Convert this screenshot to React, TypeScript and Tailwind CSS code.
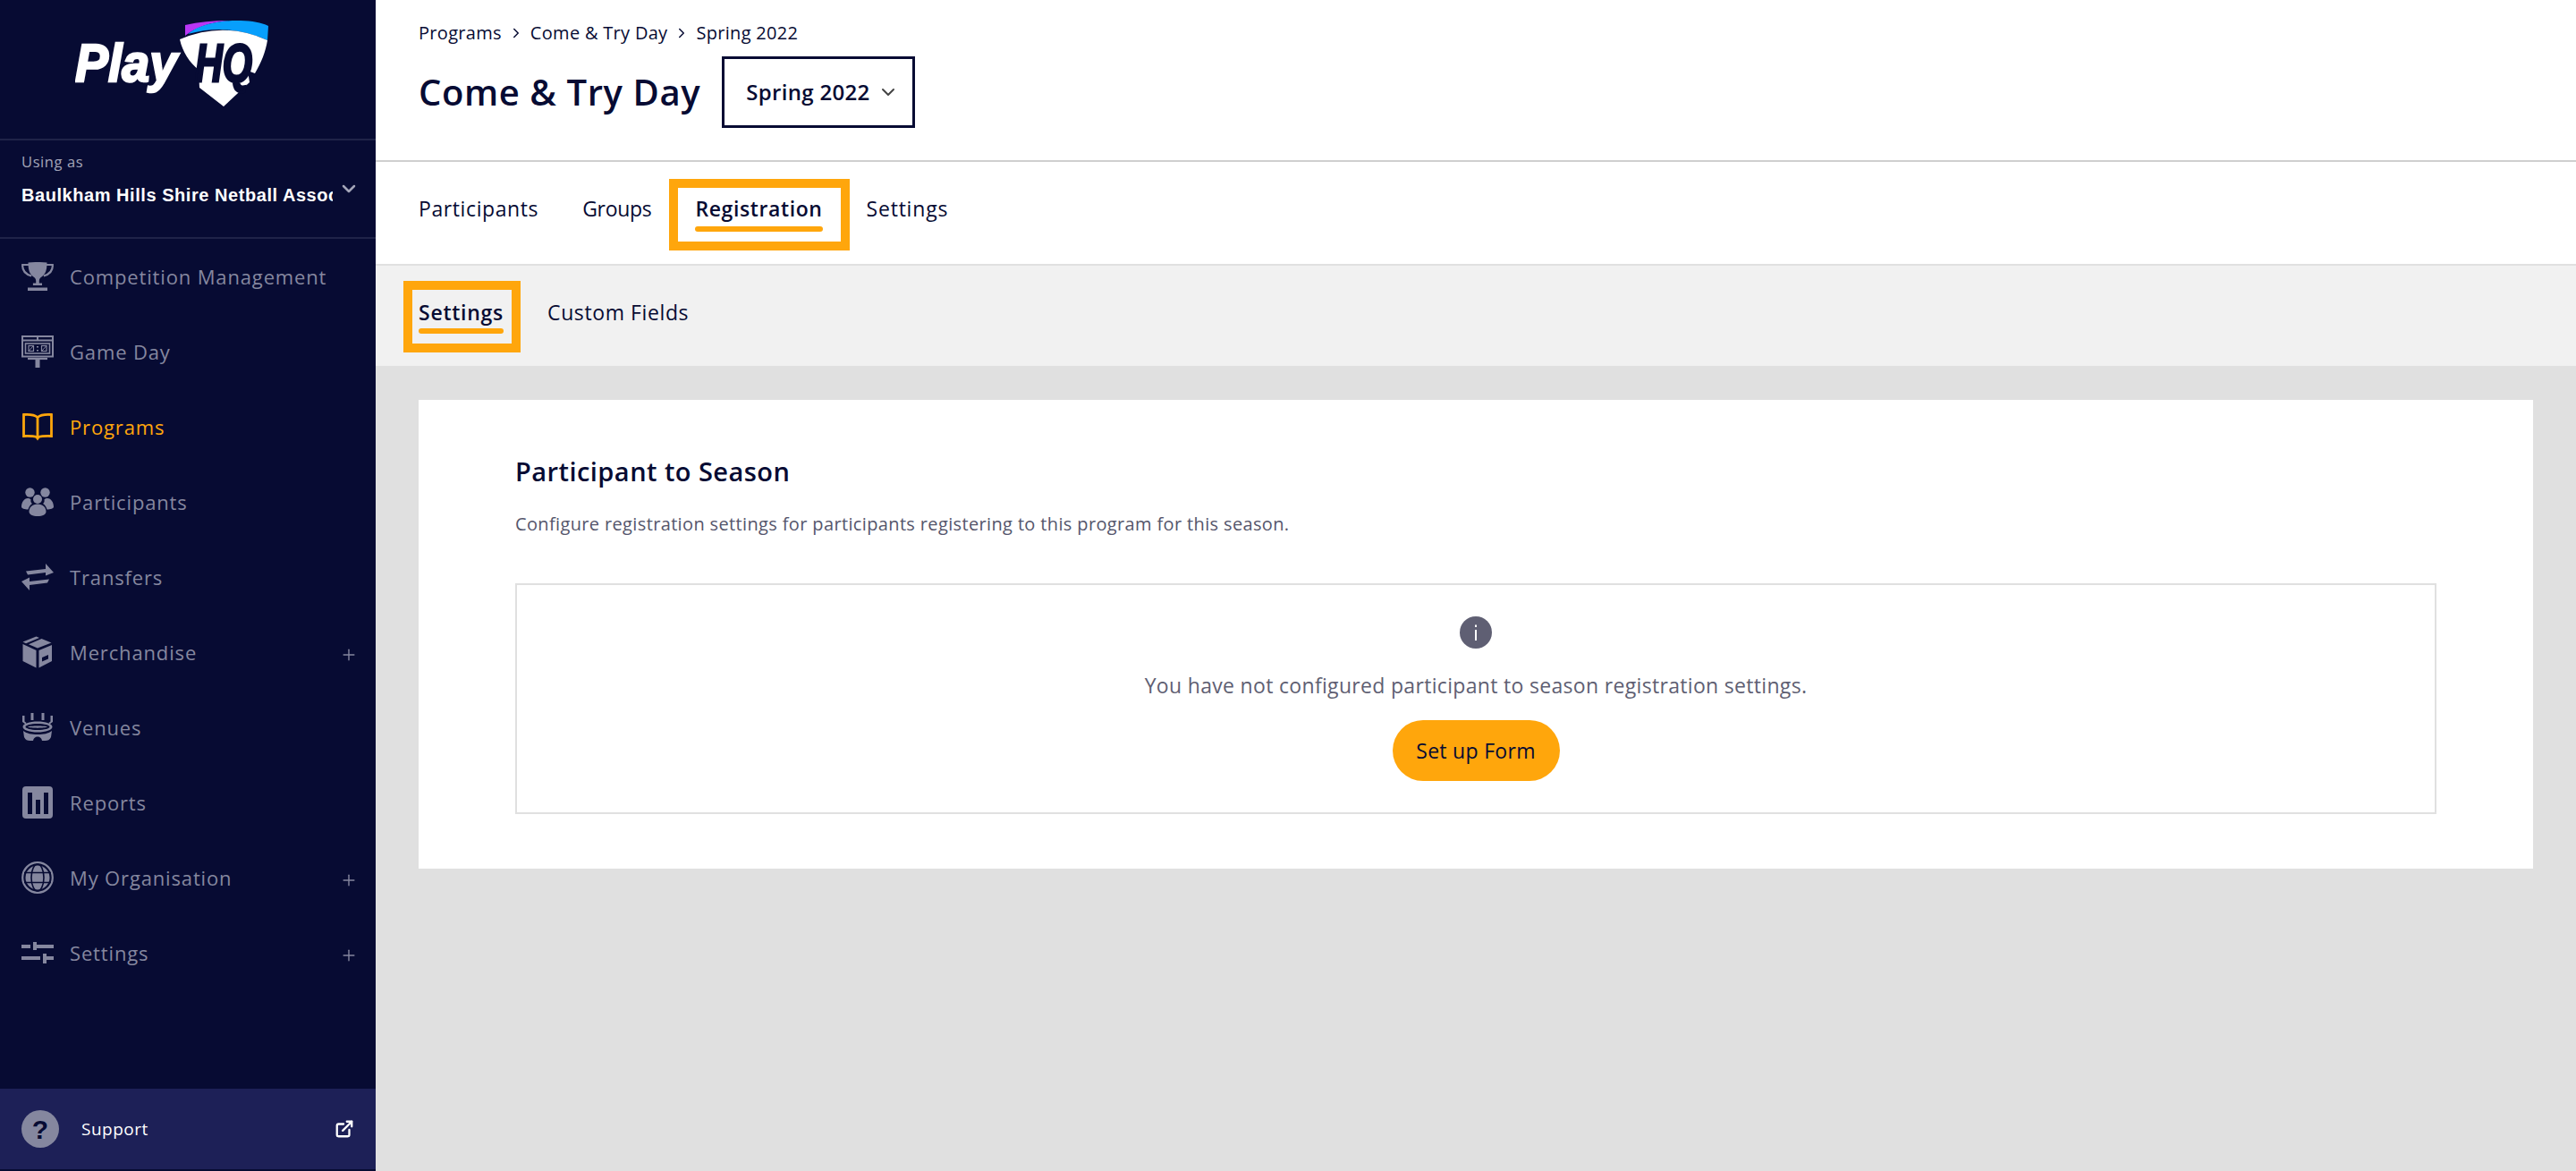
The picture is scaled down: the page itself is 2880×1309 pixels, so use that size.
import { ChevronDown, ChevronRight, Plus, ExternalLink } from "lucide-react";
import type { ReactNode } from "react";

const Trophy = () => (
  <svg viewBox="0 0 36 32" className="w-9 h-8" fill="currentColor">
    <path d="M7.500 0.500c6-.7 15-.7 21 0 0 8-1.500 13-6 16-1.400 1-2.700 2-2.700 4.500v2.500h3.200v2.500H12.900v-2.500h3.300V21c0-2.500-1.300-3.500-2.700-4.500-4.500-3-6-8-6-16z" />
    <path d="M8 3H1.200c-.5 6.500 3.300 10.500 10 12.500M28 3h6.800c.5 6.500-3.300 10.500-10 12.500" fill="none" stroke="currentColor" strokeWidth="2.200" />
    <rect x="7" y="28.500" width="22" height="3.500" />
  </svg>
);

const Scoreboard = () => (
  <svg viewBox="0 0 36 36" className="w-9 h-9" fill="none" stroke="currentColor" strokeWidth="2">
    <rect x="1" y="1" width="34" height="22.500" />
    <path d="M1 5.500h34M18 1v4.500" />
    <rect x="4.500" y="9" width="27" height="11" strokeWidth="1.600" />
    <rect x="8" y="11.500" width="5.500" height="6" strokeWidth="1.200" />
    <rect x="22.500" y="11.500" width="5.500" height="6" strokeWidth="1.200" />
    <path d="M8 17.500l5.500-6M22.500 17.500l5.500-6" strokeWidth="1" />
    <path d="M18 12v1.500M18 16v1.500" strokeWidth="2" />
    <path d="M7 26h22" strokeWidth="2.200" />
    <rect x="15.500" y="26" width="5" height="10" fill="currentColor" stroke="none" />
  </svg>
);

const Book = () => (
  <svg viewBox="0 0 36 32" className="w-9 h-8" fill="none" stroke="currentColor" strokeWidth="2.800">
    <path d="M18 5.500C15 3 9 2 2.500 2.500v24c6-.3 11 0 15.500 1 4.500-1 9.500-1.300 15.500-1v-24C27 2 21 3 18 5.500zM18 5.500v22" />
    <path d="M15.500 28h5l-2.500 3.500z" fill="currentColor" stroke="none" />
  </svg>
);

const People = () => (
  <svg viewBox="0 0 36 32" className="w-9 h-8" fill="currentColor">
    <circle cx="9.500" cy="5.500" r="5.200" />
    <circle cx="26.500" cy="5.500" r="5.200" />
    <path d="M0 21.500c0-5 3-9.500 7-9.500 1.500 0 3 .5 3.500 1.500-.5 2 .3 3.500 1.500 4.500-2.500 1.500-4 4-4.500 6.500-4 0-7.500-1-7.500-3z" />
    <path d="M36 21.500c0-5-3-9.500-7-9.500-1.500 0-3 .5-3.500 1.500.5 2-.3 3.500-1.500 4.500 2.500 1.500 4 4 4.500 6.500 4 0 7.500-1 7.500-3z" />
    <circle cx="18" cy="13" r="5" />
    <path d="M8.500 27c0-4.500 3.500-8.500 9.500-8.500s9.500 4 9.500 8.500c0 3-4 5-9.500 5s-9.500-2-9.500-5z" />
  </svg>
);

const Transfers = () => (
  <svg viewBox="0 0 36 30" className="w-9 h-[30px]" fill="currentColor">
    <path d="M5 8.500L27 6V0l9 10-9 3.500V10L7 12.500z" />
    <path d="M31 17.500L9 20V15.500L0 20l9 10v-6l20-2.500z" />
  </svg>
);

const Box = () => (
  <svg viewBox="0 0 34 36" className="w-[34px] h-9" fill="currentColor">
    <path d="M15.500 0.500L0.500 6.500l3.500 1.800L19 2z" />
    <path d="M21.500 3L7 9.200l10 4.300 15.500-6z" />
    <path d="M0.500 9v19l15 7.500V16z" />
    <path d="M33 10L18.500 16v19.500L33 28zM22 24l7-3v4.500l-7 3z" fillRule="evenodd" />
  </svg>
);

const Venue = () => (
  <svg viewBox="0 0 36 32" className="w-9 h-8" fill="currentColor">
    <path d="M1 3h2.500v6.500L5.500 11 4.500 12.500 1 10zM35 3h-2.500v6.500L30.500 11l1 1.500L35 10zM10.500 0h3v8h-3zM22.500 0h3v8h-3z" />
    <path d="M18 9.500c9 0 16.500 2.500 16.500 6 0 3.500-7.500 6-16.500 6s-16.500-2.500-16.500-6c0-3.500 7.500-6 16.500-6zm0 2.500C10 12 4.500 13.800 4.500 15.500S10 19 18 19s13.500-1.700 13.500-3.500S26 12 18 12z" fillRule="evenodd" />
    <path d="M7 15.500c3-1.200 19-1.200 22 0-3 1.500-19 1.500-22 0z" />
    <path d="M2 20c4 3 9 4 16 4s12-1 16-4l-1 7c-1.500 3-3.500 4-6.500 4h-3.500c-.5-3-2.500-4.500-5-4.500s-4.500 1.500-5 4.500H9.500C6.500 31 4.500 30 3 27z" />
  </svg>
);

const Reports = () => (
  <svg viewBox="0 0 34 36" className="w-[34px] h-9" fill="currentColor">
    <path d="M4 0h26a4 4 0 0 1 4 4v28a4 4 0 0 1-4 4H4a4 4 0 0 1-4-4V4a4 4 0 0 1 4-4zM6 7v24h5V7zM15 15v16h5V15zM24 7v24h5V7z" fillRule="evenodd" />
  </svg>
);

const Globe = () => (
  <svg viewBox="0 0 36 36" className="w-9 h-9" fill="none" stroke="currentColor">
    <circle cx="18" cy="18" r="16.800" strokeWidth="2.200" />
    <circle cx="18" cy="18" r="13.500" fill="currentColor" stroke="none" />
    <g stroke="#070b33" strokeWidth="1.600">
      <ellipse cx="18" cy="18" rx="7" ry="15" />
      <path d="M3 12.500h30M3 23.500h30" />
    </g>
  </svg>
);

const Sliders = () => (
  <svg viewBox="0 0 36 24" className="w-9 h-6" fill="currentColor">
    <rect x="0" y="3" width="10" height="4" />
    <rect x="13" y="0" width="4" height="9" />
    <rect x="17" y="3" width="19" height="4" />
    <rect x="0" y="16" width="21" height="4" />
    <rect x="24" y="13" width="4" height="11" />
    <rect x="28" y="16" width="8" height="4" />
  </svg>
);

const Logo = () => (
  <svg viewBox="0 0 230 105" className="w-[230px] h-[105px]">
    <path d="M123 20V8Q145 3 172 3Q140 6 123 20z" fill="#b936f5" />
    <path d="M126 18C140 6 165 2.500 185 3C198 3.500 208 5 216 9L215 25Q170 5 126 18z" fill="#079ffc" />
    <path d="M117 24Q166 3 215 25C213 38 208 50 201 62L193 59L195 72L166 99L139 78L138 58C128 50 120 38 117 24z" fill="#fff" />
    <text x="0" y="71" fontSize="60" fontWeight="700" fontStyle="italic" textLength="114" lengthAdjust="spacingAndGlyphs" fill="#fff" stroke="#fff" strokeWidth="2.500" className="font-['Liberation_Sans']">Play</text>
    <text x="134" y="71" fontSize="60" fontWeight="700" fontStyle="italic" textLength="64" lengthAdjust="spacingAndGlyphs" fill="#070b33" stroke="#070b33" strokeWidth="3" className="font-['Liberation_Sans']">HQ</text>
  </svg>
);

const navItems: { label: string; icon: ReactNode; active?: boolean; plus?: boolean }[] = [
  { label: "Competition Management", icon: <Trophy /> },
  { label: "Game Day", icon: <Scoreboard /> },
  { label: "Programs", icon: <Book />, active: true },
  { label: "Participants", icon: <People /> },
  { label: "Transfers", icon: <Transfers /> },
  { label: "Merchandise", icon: <Box />, plus: true },
  { label: "Venues", icon: <Venue /> },
  { label: "Reports", icon: <Reports /> },
  { label: "My Organisation", icon: <Globe />, plus: true },
  { label: "Settings", icon: <Sliders />, plus: true },
];

const Sidebar = () => (
  <aside className="w-[420px] shrink-0 h-full flex flex-col bg-[#070b33] font-['Open_Sans',sans-serif]">
    <div className="h-[157px] shrink-0 border-b-2 border-[#1f2348] flex pt-[20px] pl-[84px]">
      <Logo />
    </div>
    <div className="h-[110px] shrink-0 border-b-2 border-[#1f2348] pl-6 pr-6 pt-[13px] relative">
      <div className="text-[16.500px] leading-[22px] text-[#a3a5b8] tracking-[0.6px]">Using as</div>
      <div className="mt-[14px] w-[348px] overflow-hidden whitespace-nowrap text-[20px] leading-[24px] font-bold text-white font-['Liberation_Sans',sans-serif] tracking-[0.55px]">
        Baulkham Hills Shire Netball Association
      </div>
      <ChevronDown className="absolute right-[18px] top-[42px] w-6 h-6 text-[#a3a5b8]" strokeWidth={2.5} />
    </div>
    <nav className="flex flex-col">
      {navItems.map((item) => (
        <div
          key={item.label}
          className={`h-[84px] flex items-center pl-6 pr-5 ${item.active ? "text-[#ffa60c]" : "text-[#85879f]"}`}
        >
          <span className="w-9 h-9 shrink-0 flex items-center justify-center">{item.icon}</span>
          <span className="ml-[18px] flex-1 text-[22px] tracking-[0.85px]">{item.label}</span>
          {item.plus && <Plus className="w-5 h-5 mt-[6px]" strokeWidth={1.7} />}
        </div>
      ))}
    </nav>
    <div className="flex-1" />
    <div className="h-[90px] mb-[2px] shrink-0 bg-[#1d2057] flex items-center pl-6 pr-[24px]">
      <span className="w-[42px] h-[42px] rounded-full bg-[#85879f] flex items-center justify-center text-[30px] font-bold text-[#070b33] font-['Liberation_Sans',sans-serif]">?</span>
      <span className="ml-[25px] flex-1 text-[19px] text-white tracking-[0.5px]">Support</span>
      <ExternalLink className="w-[22px] h-[22px] text-white" strokeWidth={2.5} />
    </div>
  </aside>
);

const Highlight = ({ className }: { className: string }) => (
  <span className={`absolute border-[10px] border-[#ffa60c] pointer-events-none ${className}`} />
);

const Main = () => (
  <main className="flex-1 h-full flex flex-col bg-[#e0e0e0] text-[#070b33] font-['Open_Sans',sans-serif]">
    <header className="h-[181px] shrink-0 bg-white border-b-2 border-[#cfcfcf] pl-12">
      <div className="pt-[24px] flex items-center text-[20px] leading-[26px] tracking-[0.3px]">
        <span>Programs</span>
        <ChevronRight className="w-[18px] h-[18px] mx-[7px]" strokeWidth={2} />
        <span>Come &amp; Try Day</span>
        <ChevronRight className="w-[18px] h-[18px] mx-[7px]" strokeWidth={2} />
        <span>Spring 2022</span>
      </div>
      <div className="mt-[13px] flex items-center">
        <h1 className="text-[40px] leading-[80px] font-semibold tracking-[0.6px]">Come &amp; Try Day</h1>
        <div className="ml-6 w-[216px] h-[80px] border-[3px] border-[#070b33] flex items-center pl-[24px]">
          <span className="text-[24px] font-semibold tracking-[0.3px]">Spring 2022</span>
          <ChevronDown className="ml-[8px] w-6 h-6 text-[#444]" strokeWidth={2} />
        </div>
      </div>
    </header>

    <div className="h-[116px] shrink-0 bg-white border-b-2 border-[#e0e0e0] pl-12 flex gap-[49px] pt-[34px] text-[23px] leading-[36px] tracking-[0.6px]">
      <span>Participants</span>
      <span className="tracking-[-0.3px]">Groups</span>
      <span className="relative font-semibold">
        Registration
        <span className="absolute left-0 right-0 top-[38px] h-[6px] rounded-[3px] bg-[#ffa60c]" />
        <Highlight className="-left-[29px] -right-[30px] -top-[15px] h-[80px]" />
      </span>
      <span className="tracking-[0.8px]">Settings</span>
    </div>

    <div className="h-[112px] shrink-0 bg-[#f1f1f1] pl-12 flex gap-[49px] pt-[34px] text-[23px] leading-[36px] tracking-[0.6px]">
      <span className="relative font-semibold tracking-[0.75px]">
        Settings
        <span className="absolute left-0 right-0 top-[36px] h-[6px] rounded-[3px] bg-[#ffa60c]" />
        <Highlight className="-left-[17px] -right-[19px] -top-[17px] h-[80px]" />
      </span>
      <span>Custom Fields</span>
    </div>

    <div className="flex-1 pt-[38px] px-12">
      <section className="bg-white h-[524px] px-[108px] pt-[62px]">
        <h2 className="text-[29px] leading-[36px] font-semibold tracking-[0.45px]">Participant to Season</h2>
        <p className="mt-[28px] text-[20px] leading-[26px] text-[#55566c] tracking-[0.36px]">
          Configure registration settings for participants registering to this program for this season.
        </p>
        <div className="mt-[53px] h-[258px] border-2 border-[#e0e0e0] flex flex-col items-center pt-[35px]">
          <svg viewBox="0 0 36 36" className="w-9 h-9">
            <circle cx="18" cy="18" r="18" fill="#5f5f73" />
            <rect x="17" y="15" width="2" height="12" fill="#fff" />
            <rect x="17" y="9.500" width="2" height="2.500" fill="#fff" />
          </svg>
          <p className="mt-[28px] text-[23px] leading-[26px] text-[#5f5f73] tracking-[0.32px]">
            You have not configured participant to season registration settings.
          </p>
          <button className="mt-[26px] w-[187px] h-[68px] rounded-full bg-[#ffa60c] text-[23px] tracking-[0.3px] text-[#070b33]">
            Set up Form
          </button>
        </div>
      </section>
    </div>
  </main>
);

export default function App() {
  return (
    <div className="w-screen h-screen flex overflow-hidden">
      <Sidebar />
      <Main />
    </div>
  );
}
